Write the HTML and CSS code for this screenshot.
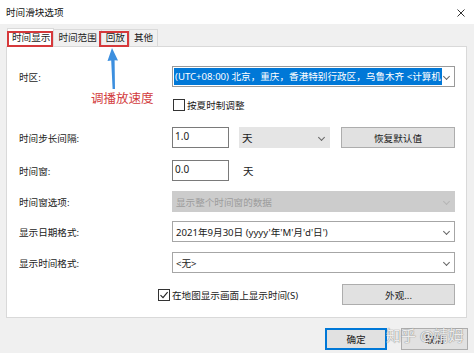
FILE: index.html
```html
<!DOCTYPE html>
<html lang="zh">
<head>
<meta charset="utf-8">
<title>时间滑块选项</title>
<link rel="stylesheet" href="styles.css">
</head>
<body>
<div class="window">
  <div class="titlebar">
    <span class="title">时间滑块选项</span>
    <svg class="close" width="8" height="8" viewBox="0 0 8 8"><path d="M0.5 0.5L7.5 7.5M7.5 0.5L0.5 7.5" stroke="#333" stroke-width="1"/></svg>
  </div>
  <div class="tabs">
    <div class="tab active">时间显示</div>
    <div class="tab">时间范围</div>
    <div class="tab">回放</div>
    <div class="tab">其他</div>
  </div>
  <div class="panel">
    <div class="row r1">
      <div class="label">时区:</div>
      <div class="combo wide"><span class="sel">(UTC+08:00) 北京，重庆，香港特别行政区，乌鲁木齐 &lt;计算机</span><span class="chev"></span></div>
    </div>
    <div class="row r2">
      <div class="label"></div>
      <div class="check"><span class="box"></span>按夏时制调整</div>
    </div>
    <div class="row r3">
      <div class="label">时间步长间隔:</div>
      <div class="textbox">1.0</div>
      <div class="combo unit">天<span class="chev"></span></div>
      <div class="button reset">恢复默认值</div>
    </div>
    <div class="row r4">
      <div class="label">时间窗:</div>
      <div class="textbox">0.0</div>
      <div class="unit-text">天</div>
    </div>
    <div class="row r5">
      <div class="label">时间窗选项:</div>
      <div class="combo wide disabled">显示整个时间窗的数据<span class="chev"></span></div>
    </div>
    <div class="row r6">
      <div class="label">显示日期格式:</div>
      <div class="combo wide">2021年9月30日 (yyyy'年'M'月'd'日')<span class="chev"></span></div>
    </div>
    <div class="row r7">
      <div class="label">显示时间格式:</div>
      <div class="combo wide">&lt;无&gt;<span class="chev"></span></div>
    </div>
    <div class="row r8">
      <div class="check showtime"><span class="box checked"><svg width="10" height="10" viewBox="0 0 10 10"><path d="M1.5 5.2L4 7.6L8.6 2.2" fill="none" stroke="#222" stroke-width="1.1"/></svg></span>在地图显示画面上显示时间(S)</div>
      <div class="button look">外观...</div>
    </div>
  </div>
  <div class="footer">
    <div class="button ok">确定</div>
    <div class="button cancel">取消</div>
  </div>

  <div class="mark mark1"></div>
  <div class="mark mark2"></div>
  <svg class="arrow" width="14" height="42" viewBox="0 0 14 42"><path d="M5 0L0.5 13L4.2 12.4L5.6 41L8 41L7.6 12.2L11 12.6Z" fill="#3c8fdf"/></svg>
  <div class="note">调播放速度</div>
  <div class="watermark">知乎 @靖姆</div>
</div>
</body>
</html>
```
FILE: styles.css
```css
html, body {
  margin: 0;
  padding: 0;
}
body {
  width: 474px;
  height: 353px;
  overflow: hidden;
  background: #f0f0f0;
  font-family: "Noto Sans", "Noto Sans CJK SC", sans-serif;
  font-size: 9.6px;
  color: #1a1a1a;
}
.window {
  position: relative;
  width: 474px;
  height: 353px;
}
.titlebar {
  height: 24px;
  background: #fff;
  display: flex;
  align-items: center;
  justify-content: space-between;
  padding: 0 9px 0 6px;
}
.title {
  font-size: 9.6px;
  color: #111;
}
.close {
  display: block;
  margin-top: 1px;
}
.tabs {
  height: 22px;
  display: flex;
  align-items: flex-end;
  padding-left: 7px;
  position: relative;
  z-index: 1;
}
.tab {
  height: 17px;
  line-height: 16px;
  padding: 0 4px;
  border: 1px solid #dadada;
  border-bottom: none;
  box-sizing: border-box;
  background: #f0f0f0;
  margin-right: -1px;
}
.tab.active {
  height: 19px;
  background: #fff;
  margin-bottom: -1px;
  padding: 0 3px 0 4px;
  line-height: 18px;
}
.panel {
  margin: 0 7px 0 6px;
  height: 272px;
  box-sizing: border-box;
  background: #fff;
  border: 1px solid #d9d9d9;
  padding: 19px 10px 0 12px;
}
.row {
  display: flex;
  align-items: center;
  height: 21px;
}
.label {
  width: 153px;
  flex: none;
}
.r2 { margin-top: 11px; height: 13px; }
.r3 { margin-top: 16px; }
.r4 { margin-top: 12px; }
.r5 { margin-top: 10px; }
.r6 { margin-top: 9px; }
.r7 { margin-top: 10px; }
.r8 { margin-top: 11px; }

.combo {
  position: relative;
  height: 21px;
  box-sizing: border-box;
  border: 1px solid #a6a6a6;
  background: #fff;
  display: flex;
  align-items: center;
  padding-left: 3px;
  white-space: nowrap;
  overflow: hidden;
}
.combo.wide {
  width: 283px;
}
.r1 .combo.wide {
  padding-left: 1px;
  border-color: #9a9a9a;
}
.sel {
  background: #0078d7;
  color: #fff;
  line-height: 17px;
  padding: 0 1px;
}
.combo.disabled {
  background: #cccccc;
  border-color: #cccccc;
  color: #9c9c9c;
}
.combo.unit {
  width: 91px;
  margin-left: 10px;
  background: #e5e5e5;
  border-color: #e5e5e5;
  padding-left: 2px;
  font-size: 10.5px;
}
.chev {
  position: absolute;
  right: 5px;
  top: 7px;
  width: 4px;
  height: 4px;
  border-right: 1px solid #666;
  border-bottom: 1px solid #666;
  transform: rotate(45deg);
}
.disabled .chev {
  border-color: #b5b5b5;
}
.textbox {
  width: 57px;
  height: 21px;
  box-sizing: border-box;
  border: 1px solid #7a7a7a;
  padding: 1px 2px;
  line-height: 14px;
  font-size: 10px;
}
.unit-text {
  margin-left: 14px;
  font-size: 10.5px;
}
.button {
  height: 21px;
  box-sizing: border-box;
  border: 1px solid #adadad;
  background: #e1e1e1;
  display: flex;
  align-items: center;
  justify-content: center;
}
.reset {
  width: 114px;
  margin-left: 11px;
}
.check {
  display: flex;
  align-items: center;
  padding-left: 1px;
}
.box {
  width: 12px;
  height: 12px;
  box-sizing: border-box;
  border: 1px solid #333;
  margin-right: 2px;
  background: #fff;
  display: flex;
  align-items: center;
  justify-content: center;
}
.showtime {
  margin-left: 138px;
}
.look {
  width: 113px;
  margin-left: auto;
  margin-right: 1px;
}
.footer {
  display: flex;
  justify-content: flex-end;
  margin-top: 10px;
  padding-right: 6px;
  gap: 14px;
}
.footer .button {
  height: 22px;
}
.ok {
  width: 62px;
  border: 1px solid #0078d7;
  box-shadow: inset 0 0 0 1px #0078d7;
}
.cancel {
  width: 67px;
}

.mark {
  position: absolute;
  border: 2px solid #d6393b;
  box-sizing: border-box;
  z-index: 2;
}
.mark1 {
  left: 7px;
  top: 31px;
  width: 46px;
  height: 16px;
}
.mark2 {
  left: 99px;
  top: 31px;
  width: 30px;
  height: 16px;
}
.arrow {
  position: absolute;
  left: 107px;
  top: 48px;
  z-index: 2;
}
.note {
  position: absolute;
  left: 91px;
  top: 88px;
  font-size: 12.5px;
  color: #d23b3d;
  z-index: 2;
}
.watermark {
  position: absolute;
  left: 386px;
  top: 324px;
  font-size: 15px;
  color: rgba(255, 255, 255, 0.85);
  text-shadow: 0 0 1px #8a8a8a, 0 0 1px #8a8a8a;
  z-index: 3;
  white-space: nowrap;
}
```
